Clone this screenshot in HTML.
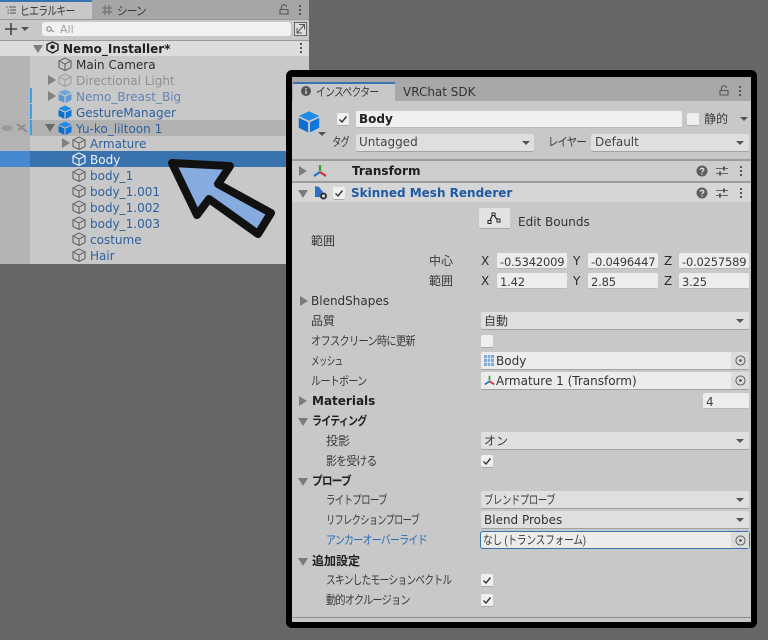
<!DOCTYPE html>
<html lang="ja"><head><meta charset="utf-8"><title>Unity Inspector</title>
<style>
html,body{margin:0;padding:0}
body{width:768px;height:640px;position:relative;overflow:hidden;background:#666;font-family:"DejaVu Sans","Noto Sans CJK JP",sans-serif;font-size:12px;color:#2c2c2c;filter:blur(.3px)}
.b{position:absolute}
.t{position:absolute;height:16px;line-height:16px;white-space:nowrap;margin-top:1px;transform-origin:0 50%}
.j{font-family:"Liberation Sans","Noto Sans CJK JP",sans-serif;font-size:12px;letter-spacing:-.9px;color:#3a3a3a}
.k{font-size:12px;letter-spacing:0}
.s{font-weight:bold;color:#202020}
.bl{color:#2e5f9e}
.n{font-size:11.5px;letter-spacing:-.2px;color:#3a3a3a}
.f{position:absolute;background:#ededed;border-radius:2px;box-sizing:border-box;border-bottom:1px solid #b8b8b8}
.d{position:absolute;background:#dfdfdf;border-radius:2px;box-sizing:border-box;border-bottom:1.5px solid #a2a2a2;height:18px}
.c{position:absolute;width:12px;height:12px;background:#efefef;border-radius:2px;border-bottom:1px solid #aaa}
.ar{position:absolute;width:0;height:0;border-left:4px solid transparent;border-right:4px solid transparent;border-top:4px solid #555}
.tr{position:absolute;width:0;height:0;border-top:5px solid transparent;border-bottom:5px solid transparent;border-left:8px solid #7c7c7c}
.td{position:absolute;width:0;height:0;border-left:5px solid transparent;border-right:5px solid transparent;border-top:8px solid #7c7c7c}
svg{position:absolute;overflow:visible}
</style></head><body>

<svg width="0" height="0" style="position:absolute"><defs>
<symbol id="cube" viewBox="0 0 14 14"><path d="M7 1 13 4V10.500L7 13.500 1 10.500V4ZM1 4 7 7 13 4M7 7V13.500" fill="none" stroke="#6b6b6b" stroke-width="1.200"/></symbol>
<symbol id="cubeW" viewBox="0 0 14 14"><path d="M7 1 13 4V10.500L7 13.500 1 10.500V4ZM1 4 7 7 13 4M7 7V13.500" fill="none" stroke="#e8eef5" stroke-width="1.200"/></symbol>
<symbol id="cubeG" viewBox="0 0 14 14"><path d="M7 1 13 4V10.500L7 13.500 1 10.500V4ZM1 4 7 7 13 4M7 7V13.500" fill="none" stroke="#a3a3a3" stroke-width="1.200"/></symbol>
<symbol id="cubeB" viewBox="0 0 14 14"><path d="M7 .5 13.500 3.500 7 6.500 .5 3.500Z" fill="#1f8be8"/><path d="M.5 4.700 6.400 7.500V14L.5 11Z" fill="#0c6fcf"/><path d="M13.500 4.700 7.600 7.500V14L13.500 11Z" fill="#0f77da"/></symbol>
<symbol id="chk" viewBox="0 0 12 12"><path d="M2.500 6.500 5 9 9.500 3.500" fill="none" stroke="#333" stroke-width="1.400"/></symbol>
<symbol id="q" viewBox="0 0 12 12"><circle cx="6" cy="6" r="5.500" fill="#5e5e5e"/><path d="M4.300 4.800C4.300 2.800 7.800 2.800 7.800 4.800 7.800 6 6 6 6 7.300M6 8.300V9.500" fill="none" stroke="#ddd" stroke-width="1.300"/></symbol>
<symbol id="sl" viewBox="0 0 12 12"><path d="M0 3.500H12M0 8.500H12" stroke="#666" stroke-width="1"/><path d="M7 1.500H9V5.500H7ZM3 6.500H5V10.500H3Z" fill="#555"/></symbol>
<symbol id="dots" viewBox="0 0 4 12"><path d="M1 1H3V3H1ZM1 5H3V7H1ZM1 9H3V11H1Z" fill="#555"/></symbol>
<symbol id="tg" viewBox="0 0 12 12"><circle cx="6" cy="6" r="5" fill="none" stroke="#555" stroke-width="1"/><circle cx="6" cy="6" r="1.500" fill="#555"/></symbol>
<symbol id="tf" viewBox="0 0 14 14"><path d="M7 7V1" stroke="#3f9b3f" stroke-width="2.200"/><path d="M7 8 1 12" stroke="#1d6fd0" stroke-width="2.200"/><path d="M7 8 13 12" stroke="#cc3030" stroke-width="2.200"/></symbol>
</defs></svg>

<!-- Hierarchy -->
<div class="b" style="left:0;top:0;width:309px;height:264px;background:#c8c8c8"></div>
<div class="b" style="left:0;top:0;width:309px;height:19px;background:#a6a6a6"></div>
<div class="b" style="left:0;top:0;width:92px;height:19px;background:#c8c8c8;border-top:2px solid #3a72b0;box-sizing:border-box"></div>
<svg style="left:6px;top:6px" width="10" height="9"><path d="M0 1H1.500M3 1H10M1.500 4H3M4 4H10M1.500 7H3M4 7H10" stroke="#555" stroke-width="1"/></svg>
<span class="t j" style="left:20px;top:2px;font-size:12px;transform:scaleX(.82)">ヒエラルキー</span>
<svg style="left:102px;top:5px" width="10" height="10"><path d="M3 0V10M7 0V10M0 3H10M0 7H10" stroke="#666" stroke-width="1"/></svg>
<span class="t j" style="left:117px;top:2px;font-size:12px;transform:scaleX(.88)">シーン</span>
<svg style="left:279px;top:4px" width="10" height="11"><path d="M2.500 5V3C2.500 0 7.500 0 7.500 3M1 5.500H9V10H1Z" fill="none" stroke="#555" stroke-width="1.100"/></svg>
<svg style="left:298px;top:4px" width="4" height="12"><use href="#dots"/></svg>
<div class="b" style="left:0;top:19px;width:309px;height:1px;background:#9a9a9a"></div>
<svg style="left:5px;top:23px" width="12" height="12"><path d="M6 0V12M0 6H12" stroke="#444" stroke-width="1.600"/></svg>
<div class="ar" style="left:21px;top:27px"></div>
<div class="b" style="left:42px;top:22px;width:249px;height:14px;background:#f1f1f1;border-radius:3px"></div>
<svg style="left:46px;top:26px" width="8" height="7"><circle cx="3" cy="3" r="2.200" fill="none" stroke="#777"/><path d="M5 4 8 6" stroke="#777"/></svg>
<span class="t" style="left:60px;top:21px;font-size:11px;color:#a2a2a2">All</span>
<svg style="left:294px;top:22px" width="13" height="14"><path d="M.5.500H12.500V13.500H.5Z" fill="#ddd" stroke="#666"/><path d="M5 2.500H10.500V7.500M3 11 10 3M3 6V11H8" fill="none" stroke="#555"/></svg>
<div class="b" style="left:0;top:40px;width:309px;height:1px;background:#9a9a9a"></div>
<div class="b" style="left:0;top:41px;width:309px;height:15px;background:#dcdcdc"></div>
<div class="b" style="left:0;top:56px;width:30px;height:208px;background:#b4b4b4"></div>
<div class="td" style="left:33px;top:45px"></div>
<svg style="left:46px;top:41px" width="13" height="13" viewBox="0 0 13 13"><path d="M6.500 1 12 3.500V9L6.500 12 1 9V3.500Z" fill="none" stroke="#222" stroke-width="1.400"/><circle cx="6.500" cy="6" r="2.200" fill="#222"/></svg>
<span class="t s" style="left:63px;top:40px">Nemo_Installer*</span>
<svg style="left:299px;top:42px" width="4" height="12"><use href="#dots"/></svg>

<div class="b" style="left:0;top:120px;width:309px;height:16px;background:#b2b2b2"></div>
<div class="b" style="left:0;top:151px;width:309px;height:16px;background:#3a72b0"></div>
<div class="b" style="left:0;top:151px;width:30px;height:16px;background:#4589d0"></div>
<div class="b" style="left:30px;top:88px;width:2px;height:15px;background:#3aa3e8"></div>
<div class="b" style="left:30px;top:104px;width:2px;height:15px;background:#3aa3e8"></div>
<div class="b" style="left:30px;top:120px;width:2px;height:15px;background:#3aa3e8"></div>
<svg style="left:1px;top:124px" width="12" height="8"><path d="M0 4C3 0 9 0 12 4 9 8 3 8 0 4Z" fill="#9a9a9a"/></svg>
<svg style="left:17px;top:123px" width="11" height="10"><path d="M0 1 10 9M1 7 8 2" stroke="#8c8c8c" stroke-width="2"/></svg>

<svg style="left:58px;top:57px" width="14" height="14"><use href="#cube"/></svg>
<span class="t" style="left:76px;top:56px">Main Camera</span>
<div class="tr" style="left:48px;top:75px;border-left-color:#808080"></div>
<svg style="left:58px;top:73px" width="14" height="14"><use href="#cubeG"/></svg>
<span class="t" style="left:76px;top:72px;color:#919191">Directional Light</span>
<div class="tr" style="left:48px;top:91px;border-left-color:#808080"></div>
<svg style="left:58px;top:89px;opacity:.55" width="14" height="14"><use href="#cubeB"/></svg>
<span class="t" style="left:76px;top:88px;color:#6384b6">Nemo_Breast_Big</span>
<svg style="left:58px;top:105px" width="14" height="14"><use href="#cubeB"/></svg>
<span class="t bl" style="left:76px;top:104px">GestureManager</span>
<div class="td" style="left:45px;top:124px;border-top-color:#6a6a6a"></div>
<svg style="left:58px;top:121px" width="14" height="14"><use href="#cubeB"/></svg>
<span class="t bl" style="left:76px;top:120px">Yu-ko_liltoon 1</span>
<div class="tr" style="left:62px;top:138px;border-left-color:#808080"></div>
<svg style="left:72px;top:136px" width="14" height="14"><use href="#cube"/></svg>
<span class="t bl" style="left:90px;top:135px">Armature</span>
<svg style="left:72px;top:152px" width="14" height="14"><use href="#cubeW"/></svg>
<span class="t" style="left:90px;top:151px;color:#f2f2f2">Body</span>
<svg style="left:72px;top:168px" width="14" height="14"><use href="#cube"/></svg>
<span class="t bl" style="left:90px;top:167px">body_1</span>
<svg style="left:72px;top:184px" width="14" height="14"><use href="#cube"/></svg>
<span class="t bl" style="left:90px;top:183px">body_1.001</span>
<svg style="left:72px;top:200px" width="14" height="14"><use href="#cube"/></svg>
<span class="t bl" style="left:90px;top:199px">body_1.002</span>
<svg style="left:72px;top:216px" width="14" height="14"><use href="#cube"/></svg>
<span class="t bl" style="left:90px;top:215px">body_1.003</span>
<svg style="left:72px;top:232px" width="14" height="14"><use href="#cube"/></svg>
<span class="t bl" style="left:90px;top:231px">costume</span>
<svg style="left:72px;top:248px" width="14" height="14"><use href="#cube"/></svg>
<span class="t bl" style="left:90px;top:247px">Hair</span>

<!-- Arrow -->
<svg style="left:0;top:0" width="768" height="640"><path d="M172 163 230 166 218 184 271 213 258 234 209 199 197 215Z" fill="#86abdf" stroke="#111" stroke-width="8" stroke-linejoin="round"/></svg>

<!-- Inspector -->
<div class="b" style="left:286px;top:70px;width:471px;height:558px;background:#000;border-radius:6px"></div>
<div class="b" style="left:292px;top:77px;width:459px;height:545px;background:#c8c8c8"></div>
<div class="b" style="left:292px;top:77px;width:459px;height:24px;background:#a8a8a8"></div>
<div class="b" style="left:293px;top:82px;width:102px;height:19px;background:#c8c8c8;border-top:2px solid #3a72b0;box-sizing:border-box"></div>
<svg style="left:301px;top:86px" width="10" height="10"><circle cx="5" cy="5" r="5" fill="#555"/><path d="M5 2V3.500M5 4.500V8" stroke="#ddd" stroke-width="1.300"/></svg>
<span class="t j" style="left:316px;top:83px;transform:scaleX(.82)">インスペクター</span>
<span class="t" style="left:403px;top:83px;color:#333">VRChat SDK</span>
<svg style="left:719px;top:85px" width="10" height="11"><path d="M2.500 5V3C2.500 0 7.500 0 7.500 3M1 5.500H9V10H1Z" fill="none" stroke="#555" stroke-width="1.100"/></svg>
<svg style="left:738px;top:85px" width="4" height="12"><use href="#dots"/></svg>

<svg style="left:298px;top:110px" width="22" height="23"><use href="#cubeB"/></svg>
<div class="ar" style="left:318px;top:132px"></div>
<div class="c" style="left:337px;top:113px"></div>
<svg style="left:337px;top:113px" width="12" height="12"><use href="#chk"/></svg>
<div class="f" style="left:356px;top:111px;width:326px;height:17px;background:#f0f0f0"></div>
<span class="t s" style="left:359px;top:110px">Body</span>
<div class="c" style="left:687px;top:113px"></div>
<span class="t j k" style="left:704px;top:110px">静的</span>
<div class="ar" style="left:740px;top:117px"></div>
<span class="t j" style="left:332px;top:133px;font-size:12px;transform:scaleX(.77)">タグ</span>
<div class="d" style="left:356px;top:134px;width:178px"></div>
<span class="t" style="left:359px;top:133px;color:#444">Untagged</span>
<div class="ar" style="left:522px;top:141px"></div>
<span class="t j" style="left:548px;top:133px;font-size:12px;transform:scaleX(.86)">レイヤー</span>
<div class="d" style="left:591px;top:134px;width:158px"></div>
<span class="t" style="left:595px;top:133px;color:#444">Default</span>
<div class="ar" style="left:736px;top:141px"></div>

<div class="b" style="left:292px;top:159px;width:459px;height:2px;background:#9c9c9c"></div>
<div class="b" style="left:292px;top:161px;width:459px;height:20px;background:#cdcdcd"></div>
<div class="b" style="left:292px;top:181px;width:459px;height:2px;background:#9c9c9c"></div>
<div class="b" style="left:292px;top:183px;width:459px;height:19px;background:#d6d6d6"></div>
<div class="tr" style="left:299px;top:166px"></div>
<svg style="left:313px;top:164px" width="14" height="14"><use href="#tf"/></svg>
<span class="t s" style="left:352px;top:162px">Transform</span>
<svg style="left:696px;top:165px" width="12" height="12"><use href="#q"/></svg>
<svg style="left:716px;top:165px" width="12" height="12"><use href="#sl"/></svg>
<svg style="left:739px;top:165px" width="4" height="12"><use href="#dots"/></svg>
<div class="td" style="left:298px;top:190px"></div>
<svg style="left:314px;top:186px" width="14" height="14" viewBox="0 0 14 14"><path d="M1 0V11H7V8L9 6 5 1Z" fill="#2d6fc4"/><circle cx="9.500" cy="10" r="3.500" fill="#333"/><circle cx="9.500" cy="10" r="1.500" fill="#ddd"/></svg>
<div class="c" style="left:333px;top:187px"></div>
<svg style="left:333px;top:187px" width="12" height="12"><use href="#chk"/></svg>
<span class="t s" style="left:351px;top:184px;color:#1d5aa3">Skinned Mesh Renderer</span>
<svg style="left:696px;top:187px" width="12" height="12"><use href="#q"/></svg>
<svg style="left:716px;top:187px" width="12" height="12"><use href="#sl"/></svg>
<svg style="left:739px;top:187px" width="4" height="12"><use href="#dots"/></svg>

<div class="b" style="left:479px;top:208px;width:31px;height:21px;background:#e2e2e2;border-radius:2px;border-bottom:1px solid #aaa;box-sizing:border-box"></div>
<svg style="left:487px;top:212px" width="15" height="13" viewBox="0 0 15 13"><path d="M3 8.500 6 2 10.500 8" fill="none" stroke="#222" stroke-width="1.200"/><path d="M1 8.500H4V11.500H1ZM5 1H8V3.500H5ZM10 7H13V10H10Z" fill="#e8e8e8" stroke="#222"/></svg>
<span class="t" style="left:518px;top:213px;color:#333">Edit Bounds</span>

<span class="t j k" style="left:311px;top:232px">範囲</span>
<span class="t j k" style="left:429px;top:252px">中心</span>
<span class="t j k" style="left:429px;top:272px">範囲</span>
<span class="t" style="left:481px;top:252px">X</span>
<span class="t" style="left:573px;top:252px">Y</span>
<span class="t" style="left:664px;top:252px">Z</span>
<span class="t" style="left:481px;top:272px">X</span>
<span class="t" style="left:573px;top:272px">Y</span>
<span class="t" style="left:664px;top:272px">Z</span>
<div class="f" style="left:497px;top:253px;width:70px;height:16px"></div>
<div class="f" style="left:588px;top:253px;width:70px;height:16px"></div>
<div class="f" style="left:679px;top:253px;width:70px;height:16px"></div>
<div class="f" style="left:497px;top:273px;width:70px;height:16px"></div>
<div class="f" style="left:588px;top:273px;width:70px;height:16px"></div>
<div class="f" style="left:679px;top:273px;width:70px;height:16px"></div>
<span class="t n" style="left:500px;top:253px">-0.5342009</span>
<span class="t n" style="left:591px;top:253px">-0.0496447</span>
<span class="t n" style="left:682px;top:253px">-0.0257589</span>
<span class="t n" style="left:500px;top:273px">1.42</span>
<span class="t n" style="left:591px;top:273px">2.85</span>
<span class="t n" style="left:682px;top:273px">3.25</span>

<div class="tr" style="left:300px;top:296px"></div>
<span class="t" style="left:311px;top:292px;color:#333">BlendShapes</span>
<span class="t j k" style="left:311px;top:312px">品質</span>
<div class="d" style="left:481px;top:312px;width:268px"></div>
<span class="t j k" style="left:484px;top:312px">自動</span>
<div class="ar" style="left:736px;top:319px"></div>
<span class="t j" style="left:311px;top:332px;transform:scaleX(.855)">オフスクリーン時に更新</span>
<div class="c" style="left:481px;top:335px"></div>
<span class="t j" style="left:311px;top:352px;transform:scaleX(.71)">メッシュ</span>
<div class="d" style="left:481px;top:352px;width:268px;background:#ececec"></div>
<div class="b" style="left:731px;top:352px;width:18px;height:17px;background:#dcdcdc"></div>
<svg style="left:484px;top:355px" width="10" height="11" viewBox="0 0 10 11"><path d="M0 0H10V11H0Z" fill="#7fa9d8"/><path d="M3.300 0V11M6.600 0V11M0 3.600H10M0 7.300H10" stroke="#e6eef6" stroke-width=".8"/></svg>
<span class="t" style="left:496px;top:352px;color:#333">Body</span>
<svg style="left:735px;top:355px" width="11" height="11"><use href="#tg"/></svg>
<span class="t j" style="left:311px;top:372px;transform:scaleX(.84)">ルートボーン</span>
<div class="d" style="left:481px;top:372px;width:268px;background:#ececec"></div>
<div class="b" style="left:731px;top:372px;width:18px;height:17px;background:#dcdcdc"></div>
<svg style="left:484px;top:375px" width="11" height="11"><use href="#tf"/></svg>
<span class="t" style="left:496px;top:372px;color:#333">Armature 1 (Transform)</span>
<svg style="left:735px;top:375px" width="11" height="11"><use href="#tg"/></svg>

<div class="tr" style="left:299px;top:396px"></div>
<span class="t s" style="left:312px;top:392px">Materials</span>
<div class="f" style="left:703px;top:393px;width:46px;height:16px"></div>
<span class="t" style="left:706px;top:393px;color:#444">4</span>
<div class="td" style="left:298px;top:418px"></div>
<span class="t j s" style="left:312px;top:412px;font-size:12px;transform:scaleX(.83)">ライティング</span>
<span class="t j k" style="left:326px;top:432px">投影</span>
<div class="d" style="left:481px;top:432px;width:268px"></div>
<span class="t j k" style="left:484px;top:432px">オン</span>
<div class="ar" style="left:736px;top:439px"></div>
<span class="t j" style="left:326px;top:452px;transform:scaleX(.91)">影を受ける</span>
<div class="c" style="left:481px;top:455px"></div>
<svg style="left:481px;top:455px" width="12" height="12"><use href="#chk"/></svg>
<div class="td" style="left:298px;top:478px"></div>
<span class="t j s" style="left:312px;top:472px;font-size:12px;transform:scaleX(.89)">プローブ</span>
<span class="t j" style="left:326px;top:491px;transform:scaleX(.79)">ライトプローブ</span>
<div class="d" style="left:481px;top:491px;width:268px"></div>
<span class="t j" style="left:484px;top:491px;font-size:12px;letter-spacing:-.5px;transform:scaleX(.78)">ブレンドプローブ</span>
<div class="ar" style="left:736px;top:498px"></div>
<span class="t j" style="left:326px;top:511px;transform:scaleX(.77)">リフレクションプローブ</span>
<div class="d" style="left:481px;top:511px;width:268px"></div>
<span class="t" style="left:484px;top:511px;color:#333">Blend Probes</span>
<div class="ar" style="left:736px;top:518px"></div>
<span class="t j" style="left:326px;top:531px;color:#2e6cb5;transform:scaleX(.83)">アンカーオーバーライド</span>
<div class="b" style="left:480px;top:531px;width:270px;height:18px;box-sizing:border-box;background:#ececec;border:1px solid #3a72b0;border-radius:3px"></div>
<div class="b" style="left:731px;top:532px;width:18px;height:16px;background:#dcdcdc"></div>
<span class="t j" style="left:483px;top:531px;font-size:12px;letter-spacing:-.3px;transform:scaleX(.81)">なし (トランスフォーム)</span>
<svg style="left:735px;top:535px" width="11" height="11"><use href="#tg"/></svg>
<div class="td" style="left:298px;top:558px"></div>
<span class="t j s k" style="left:312px;top:552px">追加設定</span>
<span class="t j" style="left:326px;top:571px;transform:scaleX(.81)">スキンしたモーションベクトル</span>
<div class="c" style="left:481px;top:574px"></div>
<svg style="left:481px;top:574px" width="12" height="12"><use href="#chk"/></svg>
<span class="t j" style="left:326px;top:591px;transform:scaleX(.845)">動的オクルージョン</span>
<div class="c" style="left:481px;top:594px"></div>
<svg style="left:481px;top:594px" width="12" height="12"><use href="#chk"/></svg>
<div class="b" style="left:292px;top:617px;width:459px;height:1px;background:#8e8e8e"></div>
</body></html>
